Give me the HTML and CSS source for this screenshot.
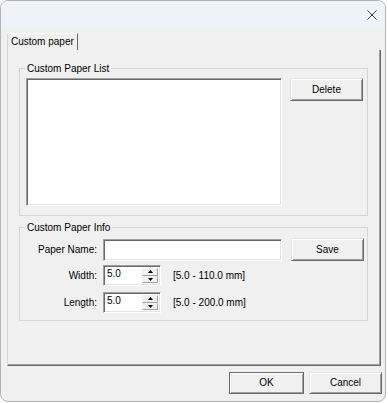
FILE: index.html
```html
<!DOCTYPE html>
<html>
<head>
<meta charset="utf-8">
<link rel="stylesheet" href="styles.css">
</head>
<body>
<div class="window">
  <div class="titlebar">
    <span class="close"><svg viewBox="0 0 10 10" width="10" height="10"><path d="M0.5 0.5 L9.5 9.5 M9.5 0.5 L0.5 9.5" stroke="#3a3a3a" stroke-width="1" fill="none"/></svg></span>
  </div>
  <div class="content">
    <div class="tabs"><div class="tab">Custom paper</div></div>
    <div class="panel">
      <fieldset class="group group-list">
        <legend>Custom Paper List</legend>
        <div class="list-body">
          <div class="field listbox"></div>
          <button class="btn">Delete</button>
        </div>
      </fieldset>
      <fieldset class="group group-info">
        <legend>Custom Paper Info</legend>
        <div class="info-body">
          <div class="row row-name">
            <span class="label">Paper Name:</span>
            <div class="field name-input"></div>
            <button class="btn save">Save</button>
          </div>
          <div class="row row-width">
            <span class="label">Width:</span>
            <div class="field spin">
              <span class="spin-value">5.0</span>
              <span class="spin-buttons">
                <span class="spin-btn"><svg viewBox="0 0 5 3" width="5" height="3"><path d="M2.5 0 L5 3 L0 3 Z" fill="#000"/></svg></span>
                <span class="spin-btn"><svg viewBox="0 0 5 3" width="5" height="3"><path d="M0 0 L5 0 L2.5 3 Z" fill="#000"/></svg></span>
              </span>
            </div>
            <span class="range">[5.0 - 110.0 mm]</span>
          </div>
          <div class="row row-length">
            <span class="label">Length:</span>
            <div class="field spin">
              <span class="spin-value">5.0</span>
              <span class="spin-buttons">
                <span class="spin-btn"><svg viewBox="0 0 5 3" width="5" height="3"><path d="M2.5 0 L5 3 L0 3 Z" fill="#000"/></svg></span>
                <span class="spin-btn"><svg viewBox="0 0 5 3" width="5" height="3"><path d="M0 0 L5 0 L2.5 3 Z" fill="#000"/></svg></span>
              </span>
            </div>
            <span class="range">[5.0 - 200.0 mm]</span>
          </div>
        </div>
      </fieldset>
    </div>
    <div class="footer">
      <button class="btn btn-default ok">OK</button>
      <button class="btn cancel">Cancel</button>
    </div>
  </div>
</div>
</body>
</html>
```
FILE: styles.css
```css
* { box-sizing: border-box; }
html, body { margin: 0; padding: 0; }
body {
  background: #ffffff;
  width: 388px;
  height: 403px;
  font-family: "Liberation Sans", Arial, sans-serif;
  font-size: 10px;
  color: #000;
}
.window {
  width: 386px;
  height: 402px;
  border: 1px solid #b4b4b4;
  border-radius: 8px;
  overflow: hidden;
  display: flex;
  flex-direction: column;
  background: #f0f0f0;
}
.titlebar {
  height: 27px;
  flex: none;
  background: #eef3fa;
  display: flex;
  justify-content: flex-end;
  align-items: center;
  padding-right: 8px;
}
.close svg { display: block; }
.content {
  flex: 1;
  display: flex;
  flex-direction: column;
  padding: 5px 0 0 6px;
}
.tabs { display: flex; height: 17px; flex: none; }
.tab {
  width: 71px;
  height: 17px;
  border-left: 1px solid #d9d9d9;
  border-top: 1px solid #ffffff;
  border-right: 1px solid #696969;
  padding: 2px 0 0 3px;
  line-height: 12px;
  white-space: nowrap;
}
.panel {
  width: 374px;
  height: 316px;
  flex: none;
  border-left: 1px solid #d9d9d9;
  border-right: 1px solid #696969;
  border-bottom: 1px solid #696969;
  box-shadow: inset -1px -1px #a0a0a0;
  padding: 0 0 0 11px;
  display: flex;
  flex-direction: column;
}
.group {
  margin: 0;
  padding: 0;
  width: 349px;
  border: 1px solid #d5d5d5;
  min-width: 0;
}
.group legend {
  margin-left: 5px;
  padding: 0 2px;
  line-height: 11px;
}
.group-list { margin-top: 13px; }
.list-body {
  display: flex;
  align-items: flex-start;
  gap: 8px;
  padding: 4px 0 9px 6px;
}
.field {
  background: #ffffff;
  border: 1px solid;
  border-color: #a0a0a0 #ffffff #ffffff #a0a0a0;
  box-shadow: inset 1px 1px #696969, inset -1px -1px #e3e3e3;
}
.listbox { width: 256px; height: 128px; }
.btn {
  font: inherit;
  color: #000;
  background: #f0f0f0;
  border: 1px solid;
  border-color: #e3e3e3 #696969 #696969 #e3e3e3;
  box-shadow: inset 1px 1px #ffffff, inset -1px -1px #a0a0a0;
  padding: 0;
  width: 73px;
  height: 23px;
  line-height: 20px;
  text-align: center;
}
.btn-default {
  border-color: #696969;
}
.group-info { margin-top: 6px; }
.info-body { padding: 5px 0 7px 0; }
.row { display: flex; align-items: center; }
.label {
  width: 77px;
  text-align: right;
  margin-right: 6px;
  white-space: nowrap;
}
.name-input { width: 179px; height: 22px; }
.save { margin-left: 9px; }
.row-width { margin-top: 4px; }
.row-length { margin-top: 6px; }
.spin {
  width: 58px;
  height: 21px;
  display: flex;
  justify-content: space-between;
  padding: 2px 2px 2px 2px;
}
.spin-value { line-height: 11px; padding-left: 1px; }
.spin-buttons {
  width: 16px;
  display: flex;
  flex-direction: column;
}
.spin-btn {
  flex: 1;
  background: #f0f0f0;
  border: 1px solid;
  border-color: #f0f0f0 #a0a0a0 #a0a0a0 #f0f0f0;
  display: flex;
  align-items: center;
  justify-content: center;
}
.spin-btn svg { display: block; }
.range { margin-left: 12px; white-space: nowrap; }
.footer {
  display: flex;
  justify-content: flex-end;
  gap: 5px;
  padding: 6px 3px 0 0;
}
.ok { width: 75px; height: 22px; }
.cancel { width: 73px; height: 22px; }
```
